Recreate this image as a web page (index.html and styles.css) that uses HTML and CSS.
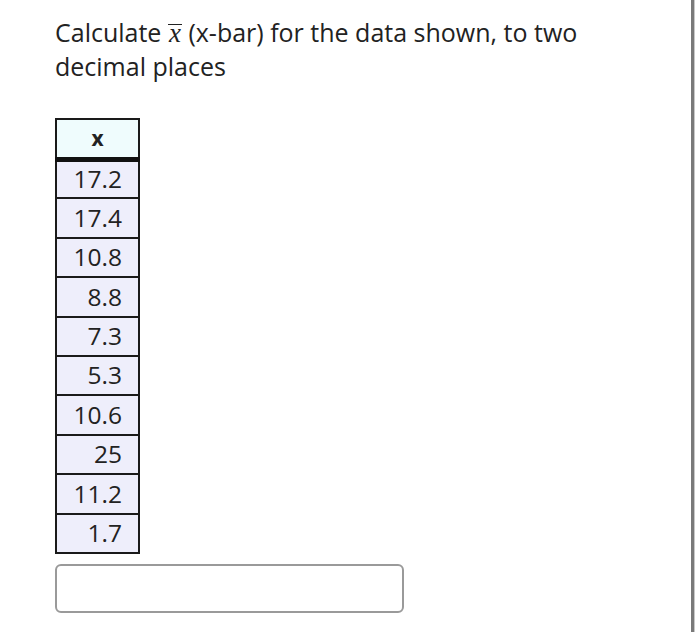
FILE: index.html
```html
<!DOCTYPE html>
<html>
<head>
<meta charset="utf-8">
<link rel="stylesheet" href="styles.css">
</head>
<body>
<div class="page">
  <div class="content">
    <p class="question">Calculate <span class="xbar">x</span> (x-bar) for the data shown, to two decimal places</p>
    <table class="data">
      <thead><tr><th>x</th></tr></thead>
      <tbody>
        <tr><td>17.2</td></tr>
        <tr><td>17.4</td></tr>
        <tr><td>10.8</td></tr>
        <tr><td>8.8</td></tr>
        <tr><td>7.3</td></tr>
        <tr><td>5.3</td></tr>
        <tr><td>10.6</td></tr>
        <tr><td>25</td></tr>
        <tr><td>11.2</td></tr>
        <tr><td>1.7</td></tr>
      </tbody>
    </table>
    <div class="answer"></div>
  </div>
  <div class="edge"></div>
</div>
</body>
</html>
```
FILE: styles.css
```css
html, body {
  margin: 0;
  padding: 0;
  background: #fff;
}
.page {
  display: flex;
  width: 700px;
  height: 632px;
}
.content {
  flex: 1;
  padding: 15px 0 0 55px;
  font-family: "Open Sans", "DejaVu Sans", sans-serif;
  color: #222;
}
.question {
  margin: 0;
  font-size: 25px;
  line-height: 34px;
  width: 570px;
}
.xbar {
  display: inline-block;
  font-family: "Liberation Serif", "DejaVu Serif", serif;
  font-style: italic;
  font-size: 27px;
  line-height: 17px;
  padding: 0 1px;
  border-top: 1.5px solid #222;
}
.data {
  margin-top: 35px;
  border-collapse: collapse;
  font-size: 24.5px;
}
.data th, .data td {
  border: 2px solid #1a1a1a;
  width: 83px;
  box-sizing: border-box;
  height: 39.4px;
  padding: 0 16px 0 0;
  line-height: 1;
}
.data th {
  background: #effcfd;
  text-align: center;
  padding: 0;
  font-weight: 700;
  font-size: 21px;
  border-bottom: 5px solid #111;
  height: 40px;
}
.data td {
  background: #eeeefb;
  text-align: right;
}
.answer {
  margin-top: 10px;
  width: 349px;
  height: 49px;
  box-sizing: border-box;
  border: 2px solid #9a9a9a;
  border-radius: 6px;
}
.edge {
  width: 3px;
  margin-right: 5px;
  background: #7a7a7a;
  border-right: 1px solid #c8c8c8;
}
```
